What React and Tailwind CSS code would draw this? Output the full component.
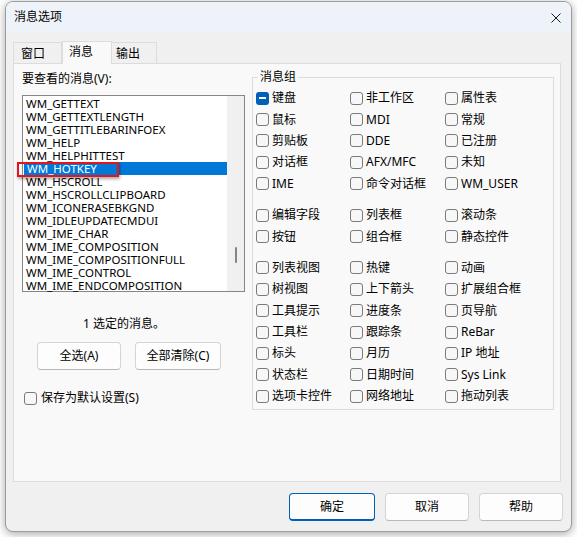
import React from 'react';

const messages = [
  'WM_GETTEXT',
  'WM_GETTEXTLENGTH',
  'WM_GETTITLEBARINFOEX',
  'WM_HELP',
  'WM_HELPHITTEST',
  'WM_HOTKEY',
  'WM_HSCROLL',
  'WM_HSCROLLCLIPBOARD',
  'WM_ICONERASEBKGND',
  'WM_IDLEUPDATECMDUI',
  'WM_IME_CHAR',
  'WM_IME_COMPOSITION',
  'WM_IME_COMPOSITIONFULL',
  'WM_IME_CONTROL',
  'WM_IME_ENDCOMPOSITION',
];

const groups = [
  [
    ['键盘', '非工作区', '属性表'],
    ['鼠标', 'MDI', '常规'],
    ['剪贴板', 'DDE', '已注册'],
    ['对话框', 'AFX/MFC', '未知'],
    ['IME', '命令对话框', 'WM_USER'],
  ],
  [
    ['编辑字段', '列表框', '滚动条'],
    ['按钮', '组合框', '静态控件'],
  ],
  [
    ['列表视图', '热键', '动画'],
    ['树视图', '上下箭头', '扩展组合框'],
    ['工具提示', '进度条', '页导航'],
    ['工具栏', '跟踪条', 'ReBar'],
    ['标头', '月历', 'IP 地址'],
    ['状态栏', '日期时间', 'Sys Link'],
    ['选项卡控件', '网络地址', '拖动列表'],
  ],
];

const font = { fontFamily: '"Noto Sans", "Noto Sans CJK SC", sans-serif' };

const Box = ({ checked }) =>
  checked ? (
    <span className="w-[13px] h-[13px] shrink-0 rounded-[3px] bg-[#005fb8] flex items-center justify-center">
      <span className="w-[7px] h-[1.5px] bg-white" />
    </span>
  ) : (
    <span className="w-[13px] h-[13px] shrink-0 rounded-[3px] border border-[#7a7a7a] bg-[#f7f7f7]" />
  );

const Check = ({ label, checked }) => (
  <div className="flex items-center gap-[3px] h-[21.4px] text-[12px] text-black whitespace-nowrap">
    <Box checked={checked} />
    <span>{label}</span>
  </div>
);

const Button = ({ children, className = '', focused }) => (
  <button
    className={`h-[28px] rounded-[4px] bg-[#fdfdfd] text-[12px] text-black ${
      focused ? 'border border-[#005fb8] border-b-2' : 'border border-[#d4d4d4] border-b-[#b8b8b8]'
    } ${className}`}
  >
    {children}
  </button>
);

export default function App() {
  return (
    <div className="w-[577px] h-[537px] bg-white overflow-hidden" style={font}>
      <div className="ml-[5px] mt-[1px] w-[567px] h-[531px] rounded-[8px] border border-[#9c9c9c] bg-[#f0f0f0] overflow-hidden shadow-[0_2px_10px_rgba(0,0,0,0.35)] flex flex-col">
        {/* title bar */}
        <div className="h-[30px] bg-[#eef3fa] flex items-center justify-between pl-[8px] pr-[10px]">
          <span className="text-[12px] text-black">消息选项</span>
          <svg width="10" height="10" viewBox="0 0 10 10" className="mt-[1px]">
            <path d="M0.5 0.5 L9.5 9.5 M9.5 0.5 L0.5 9.5" stroke="#1a1a1a" strokeWidth="1" />
          </svg>
        </div>

        {/* tabs */}
        <div className="flex items-end pl-[7px] pt-[9px] text-[12px] text-black">
          <div className="h-[21px] w-[49px] border border-b-0 border-[#dcdcdc] bg-[#f0f0f0] pl-[7px] leading-[20px] pt-[1px]">窗口</div>
          <div className="h-[23px] w-[50px] border border-b-0 border-[#dcdcdc] bg-[#f9f9f9] pl-[6px] leading-[20px] relative z-10 -mb-[1px]">消息</div>
          <div className="h-[21px] w-[45px] border border-b-0 border-l-0 border-[#dcdcdc] bg-[#f0f0f0] pl-[4px] leading-[20px] pt-[1px]">输出</div>
        </div>

        {/* panel */}
        <div className="ml-[7px] w-[548px] h-[419px] border border-[#dcdcdc] bg-[#f9f9f9] flex">
          {/* left column */}
          <div className="w-[238px] pl-[8px] pt-[7px] flex flex-col">
            <div className="h-[16px] leading-[16px] text-[12px] text-black">要查看的消息(V):</div>
            <div className="mt-[8px] w-[223px] h-[197px] border border-[#868686] bg-white flex relative">
              <div className="flex-1 pt-[1px]">
                {messages.map((m) => (
                  <div
                    key={m}
                    className={`h-[13px] leading-[13px] pl-[3px] text-[11.5px] overflow-hidden ${
                      m === 'WM_HOTKEY' ? 'bg-[#0078d7] text-white ml-[1px] pl-[2px]' : 'text-black'
                    }`}
                  >
                    {m}
                  </div>
                ))}
              </div>
              <div className="w-[17px] bg-[#f0f0f0] flex justify-center pt-[151px]">
                <div className="w-[2px] h-[16px] rounded-full bg-[#858585]" />
              </div>
              <div className="absolute left-[-6px] top-[66px] w-[102px] h-[15px] border-[2px] border-[#e3141b] shadow-[1px_2px_3px_rgba(0,0,0,0.35)]" />
            </div>
            <div className="mt-[24px] h-[16px] leading-[16px] text-[12px] text-black pl-[61px]">1 选定的消息。</div>
            <div className="mt-[10px] flex gap-[14px] pl-[15px]">
              <Button className="w-[84px]">全选(A)</Button>
              <Button className="w-[86px]">全部清除(C)</Button>
            </div>
            <div className="mt-[20px] ml-[2px] flex items-center gap-[4px] h-[16px] text-[12px] text-black">
              <Box />
              <span>保存为默认设置(S)</span>
            </div>
          </div>

          {/* message groups */}
          <fieldset className="mt-[5px] w-[302px] h-[341px] border border-[#dcdcdc]">
            <legend className="ml-[5px] px-[2px] text-[12px] leading-[16px] text-black">消息组</legend>
            <div className="pt-[2.5px] pl-[3px]">
              {groups.map((g, gi) => (
                <div key={gi} className={`grid grid-cols-[94px_95px_1fr] ${gi > 0 ? 'mt-[10px]' : ''}`}>
                  {g.map((row, ri) =>
                    row.map((label, ci) => (
                      <Check key={`${ri}-${ci}`} label={label} checked={gi === 0 && ri === 0 && ci === 0} />
                    ))
                  )}
                </div>
              ))}
            </div>
          </fieldset>
        </div>

        {/* dialog buttons */}
        <div className="mt-[11px] flex justify-end gap-[10px] pr-[8px]">
          <Button focused className="w-[86px]">确定</Button>
          <Button className="w-[84px]">取消</Button>
          <Button className="w-[84px]">帮助</Button>
        </div>
      </div>
    </div>
  );
}
